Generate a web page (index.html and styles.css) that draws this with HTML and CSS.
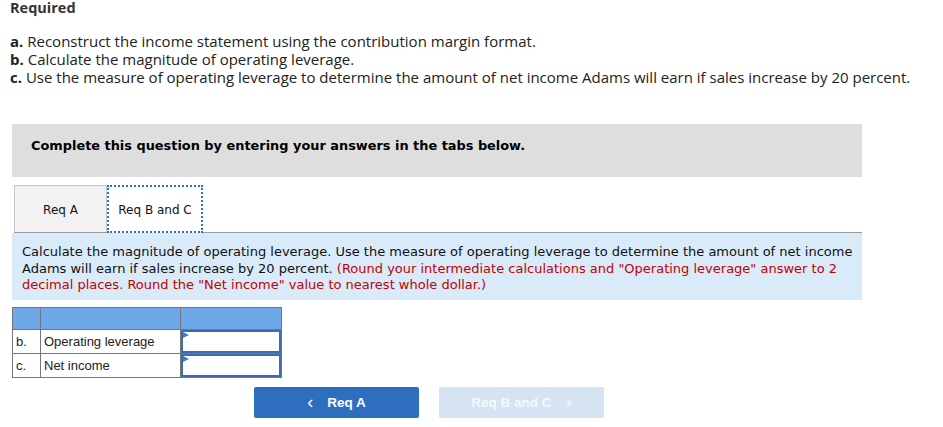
FILE: index.html
```html
<!DOCTYPE html>
<html>
<head>
<meta charset="utf-8">
<link rel="stylesheet" href="styles.css">
</head>
<body>
<div class="page">
  <div class="required">Required</div>
  <ol class="reqs">
    <li><b>a.</b> Reconstruct the income statement using the contribution margin format.</li>
    <li><b>b.</b> Calculate the magnitude of operating leverage.</li>
    <li><b>c.</b> Use the measure of operating leverage to determine the amount of net income Adams will earn if sales increase by 20 percent.</li>
  </ol>
  <div class="panel">
    <div class="banner">Complete this question by entering your answers in the tabs below.</div>
    <div class="tabs">
      <div class="tab">Req A</div>
      <div class="tab active">Req B and C</div>
    </div>
    <div class="instructions">Calculate the magnitude of operating leverage. Use the measure of operating leverage to determine the amount of net income Adams will earn if sales increase by 20 percent. <span class="red">(Round your intermediate calculations and "Operating leverage" answer to 2 decimal places. Round the "Net income" value to nearest whole dollar.)</span></div>
    <table class="grid">
      <tr class="head"><td class="c1"></td><td class="c2"></td><td class="c3"></td></tr>
      <tr><td class="c1">b.</td><td class="c2">Operating leverage</td><td class="c3"><div class="inp"><span class="flag"></span></div></td></tr>
      <tr><td class="c1">c.</td><td class="c2">Net income</td><td class="c3"><div class="inp"><span class="flag"></span></div></td></tr>
    </table>
    <div class="nav">
      <button class="btn prev"><span class="chev">&#x2039;</span>Req A</button>
      <button class="btn next">Req B and C<span class="chev">&#x203A;</span></button>
    </div>
  </div>
</div>
</body>
</html>
```
FILE: styles.css
```css
html, body { margin: 0; padding: 0; background: #fff; }
.page { padding: 0 0 0 10px; width: 925px; font-family: "Open Sans", "Liberation Sans", sans-serif; color: #222; }
.required { font-weight: bold; font-size: 14.5px; line-height: 16px; color: #333; }
.reqs { list-style: none; margin: 16px 0 0 0; padding: 0; font-size: 15px; line-height: 18px; color: #222; }
.reqs b { font-weight: bold; }
.panel { margin: 38px 0 0 2px; width: 850px; }
.banner { background: #dedede; height: 53px; box-sizing: border-box; padding: 14px 0 0 19px; font-family: "DejaVu Sans", Verdana, sans-serif; font-weight: bold; font-size: 12.9px; color: #000; }
.tabs { display: flex; margin-top: 8px; margin-left: 2px; border-bottom: 1px solid #999; height: 47px; }
.tab { width: 93px; box-sizing: border-box; background: #f2f2f2; border: 1px solid #c6c6c6; border-bottom: none; display: flex; align-items: center; justify-content: center; padding-top: 2px; font-family: "DejaVu Sans", Verdana, sans-serif; font-size: 12px; color: #111; }
.tab.active { width: 96px; background: #fff; border: 2px dotted #2f6fcc; margin-bottom: -1px; }
.instructions { background: #d9ebf9; height: 67px; box-sizing: border-box; padding: 11px 8px 0 10px; font-family: "DejaVu Sans", Verdana, sans-serif; font-size: 13px; line-height: 16.5px; color: #111; }
.red { color: #c40000; }
.grid { margin-top: 7px; border-collapse: collapse; font-family: "Liberation Sans", Arial, sans-serif; font-size: 13px; color: #222; }
.grid td { border: 1px solid #777; padding: 0 3px; height: 22px; }
.grid .head td { background: #6fa8e8; height: 21px; }
.grid .c1 { width: 21px; }
.grid .c2 { width: 133px; }
.grid .c3 { width: 100px; padding: 0; }
.inp { position: relative; height: 19px; border: 2px solid #3c6cae; background: #fff; }
.flag { position: absolute; left: 0; top: 0; width: 0; height: 0; border-top: 3px solid transparent; border-bottom: 3px solid transparent; border-left: 6px solid #3c7ad0; }
.nav { display: flex; gap: 20px; margin: 9px 0 0 242px; }
.btn { width: 165px; height: 31px; border: none; border-radius: 2px; font-family: "Liberation Sans", Arial, sans-serif; font-weight: bold; font-size: 13.5px; color: #fff; display: flex; align-items: center; justify-content: center; gap: 14px; }
.btn.prev { background: #2e6ebe; }
.btn.next { background: #d5e3f2; color: #f4f8fc; }
.chev { font-size: 18px; font-weight: normal; line-height: 1; position: relative; top: -1px; }
```
